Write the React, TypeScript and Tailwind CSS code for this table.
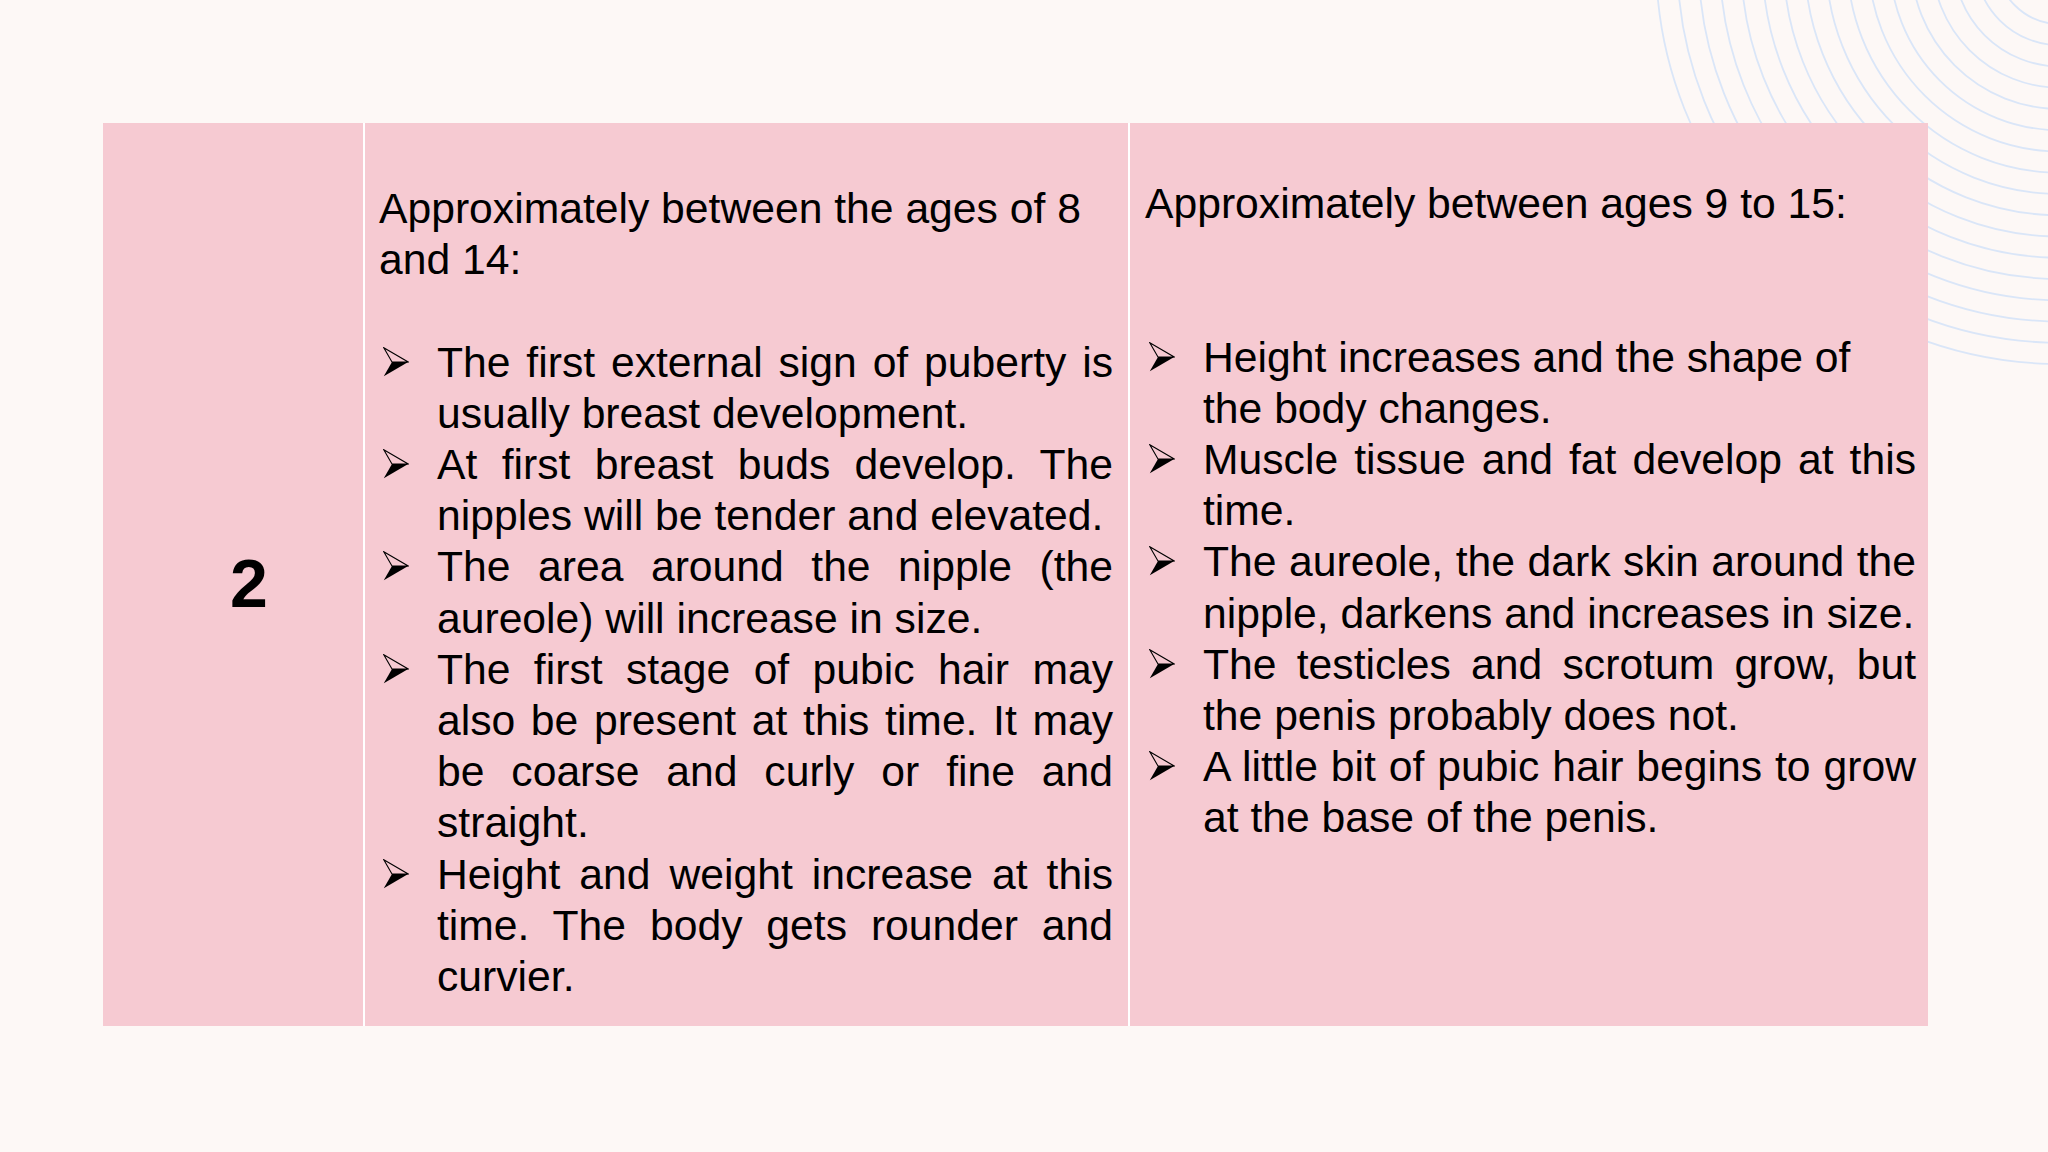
const girls = [
  { text: 'The first external sign of puberty is usually breast development.', align: 'text-justify' },
  { text: 'At first breast buds develop. The nipples will be tender and elevated.', align: 'text-justify' },
  { text: 'The area around the nipple (the aureole) will increase in size.', align: 'text-justify' },
  {
    text: 'The first stage of pubic hair may also be present at this time. It may be coarse and curly or fine and straight.',
    align: 'text-justify',
  },
  { text: 'Height and weight increase at this time. The body gets rounder and curvier.', align: 'text-justify' },
];

const boys = [
  { text: 'Height increases and the shape of the body changes.', align: 'text-left' },
  { text: 'Muscle tissue and fat develop at this time.', align: 'text-justify' },
  { text: 'The aureole, the dark skin around the nipple, darkens and increases in size.', align: 'text-justify' },
  { text: 'The testicles and scrotum grow, but the penis probably does not.', align: 'text-justify' },
  { text: 'A little bit of pubic hair begins to grow at the base of the penis.', align: 'text-justify' },
];

function Arrow() {
  return (
    <svg width="26" height="30" viewBox="0 0 26 30" className="block">
      <path d="M0.8 0.8 L25.2 15 L9 15 Z" fill="none" stroke="#000" strokeWidth="1.1" strokeLinejoin="miter" />
      <path d="M9 15 L25.2 15 L0.8 29.2 Z" fill="#000" />
    </svg>
  );
}

function Bullet({ text, align }: { text: string; align: string }) {
  return (
    <div className="flex">
      <div className="w-[58px] shrink-0 pl-[4px] pt-[10px]">
        <Arrow />
      </div>
      <p className={`flex-1 ${align}`}>{text}</p>
    </div>
  );
}

function Rings() {
  const radii = Array.from({ length: 17 }, (_, i) => 64 + i * 21.25);
  return (
    <svg className="absolute left-[1600px] top-0" width="448" height="420" viewBox="0 0 448 420">
      {radii.map((r) => (
        <circle key={r} cx="460" cy="-40" r={r} fill="none" stroke="#dae6f8" strokeWidth="1.8" />
      ))}
    </svg>
  );
}

export default function App() {
  return (
    <div className="relative w-[2048px] h-[1152px] overflow-hidden bg-[#fdf8f6] font-['Liberation_Sans',Arial,sans-serif] text-black">
      <Rings />
      <div className="relative flex ml-[103px] mt-[123px] w-[1825px] h-[903px] bg-[#f6cad2] text-[42.67px] leading-[51.2px]">
        <div className="w-[260px] shrink-0 flex items-center justify-center pl-[32px] pt-[16px]">
          <span className="text-[68px] leading-none font-bold">2</span>
        </div>
        <div className="w-[765px] shrink-0 border-l-2 border-white pl-[14px] pr-[15px] pt-[60px]">
          <p>Approximately between the ages of 8 and 14:</p>
          <p>&nbsp;</p>
          {girls.map((b) => (
            <Bullet key={b.text} {...b} />
          ))}
        </div>
        <div className="w-[800px] shrink-0 border-l-2 border-white pl-[15px] pr-[12px] pt-[55px]">
          <p>Approximately between ages 9 to 15:</p>
          <p>&nbsp;</p>
          <p>&nbsp;</p>
          {boys.map((b) => (
            <Bullet key={b.text} {...b} />
          ))}
        </div>
      </div>
    </div>
  );
}
